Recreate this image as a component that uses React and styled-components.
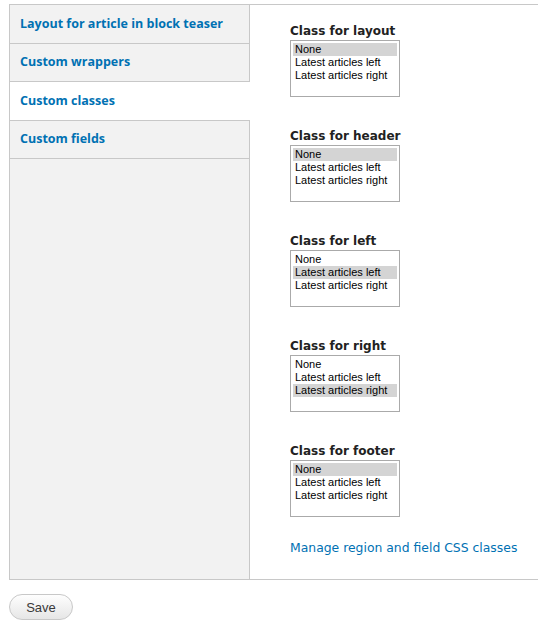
import { createGlobalStyle } from 'styled-components';
import styled from 'styled-components';

// Page reset, the form sits tight against the top left corner
const GlobalStyle = createGlobalStyle`
  html, body {
    margin: 0;
    padding: 0;
    background: #fff;
  }
  body {
    font-family: "DejaVu Sans", Verdana, sans-serif;
    color: #333;
  }
`;

const Page = styled.div`
  padding: 4px 0 0 9px;
`;

// Outer box holding the vertical tabs and the pane (right edge runs off the page)
const TabsBox = styled.div`
  display: flex;
  border: 1px solid #c8c8c8;
  border-right: none;
  background: #fff;
`;

const TabList = styled.ul`
  list-style: none;
  margin: 0;
  padding: 0;
  width: 239px;
  flex-shrink: 0;
  background: #f2f2f2;
  border-right: 1px solid #c8c8c8;
`;

const TabItem = styled.li`
  padding: 9.5px 10px 10px;
  border-bottom: 1px solid #c8c8c8;
  background: ${(p) => (p.$active ? '#fff' : 'transparent')};
  margin-right: ${(p) => (p.$active ? '-1px' : '0')};
  position: relative;
`;

const TabLink = styled.a`
  display: block;
  font-family: "Open Sans", "DejaVu Sans", sans-serif;
  font-size: 12.5px;
  font-weight: bold;
  line-height: 18px;
  color: #0071b3;
  text-decoration: none;
  white-space: nowrap;
`;

const Pane = styled.div`
  flex: 1;
  padding: 17px 0 22px 40px;
`;

const FormItem = styled.div`
  margin-bottom: ${(p) => (p.$last ? '22px' : '30px')};
`;

const Label = styled.label`
  display: block;
  font-size: 12px;
  font-weight: bold;
  line-height: 18px;
  color: #222;
`;

// Hand-built list box, like a <select size="4">
const ListBox = styled.div`
  width: 104px;
  height: 51px;
  padding: 2px;
  border: 1px solid #aaa;
  background: #fff;
  font-family: "Liberation Sans", Arial, sans-serif;
  font-size: 11px;
  color: #000;
`;

const Option = styled.div`
  height: 13px;
  line-height: 13px;
  padding: 0 2px;
  white-space: nowrap;
  background: ${(p) => (p.$selected ? '#d4d4d4' : 'transparent')};
`;

const ManageLink = styled.a`
  display: block;
  font-size: 12.4px;
  line-height: 18px;
  color: #0071b3;
  text-decoration: none;
  white-space: nowrap;
`;

const SaveButton = styled.button`
  margin-top: 14px;
  width: 64px;
  height: 26px;
  border: 1px solid #c8c8c8;
  border-radius: 13px;
  background: linear-gradient(#fefefe, #e6e6e6);
  font-family: "Liberation Sans", Arial, sans-serif;
  font-size: 13px;
  color: #3a3a3a;
  padding: 0;
`;

const tabs = [
  'Layout for article in block teaser',
  'Custom wrappers',
  'Custom classes',
  'Custom fields',
];

const regions = [
  { label: 'Class for layout', selected: 0 },
  { label: 'Class for header', selected: 0 },
  { label: 'Class for left', selected: 1 },
  { label: 'Class for right', selected: 2 },
  { label: 'Class for footer', selected: 0 },
];

const choices = ['None', 'Latest articles left', 'Latest articles right'];

const App = () => {
  return (
    <Page>
      <GlobalStyle />
      <TabsBox>
        <TabList>
          {tabs.map((tab, i) => (
            <TabItem key={tab} $active={i === 2}>
              <TabLink href="#">{tab}</TabLink>
            </TabItem>
          ))}
        </TabList>
        <Pane>
          {regions.map((region, i) => (
            <FormItem key={region.label} $last={i === regions.length - 1}>
              <Label>{region.label}</Label>
              <ListBox>
                {choices.map((choice, j) => (
                  <Option key={choice} $selected={j === region.selected}>
                    {choice}
                  </Option>
                ))}
              </ListBox>
            </FormItem>
          ))}
          <ManageLink href="#">Manage region and field CSS classes</ManageLink>
        </Pane>
      </TabsBox>
      <SaveButton>Save</SaveButton>
    </Page>
  );
};

export default App;
